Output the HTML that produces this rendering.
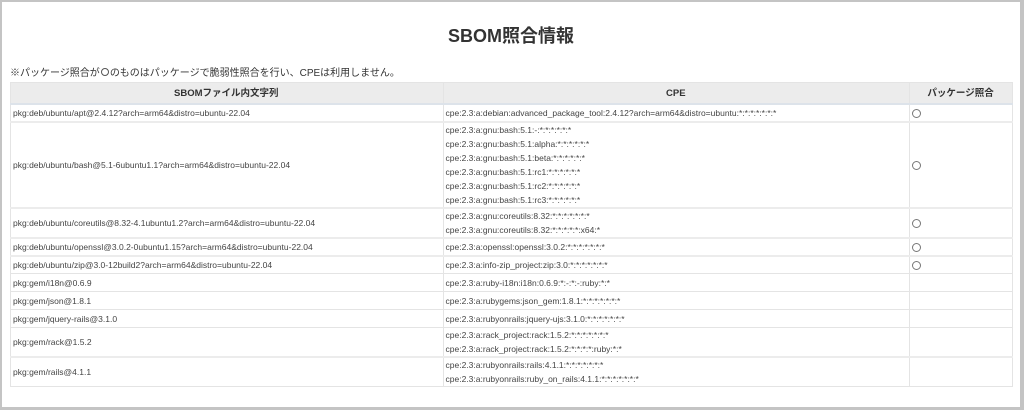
<!DOCTYPE html>
<html><head><meta charset="utf-8"><style>
*{margin:0;padding:0;box-sizing:border-box}
body{width:1024px;height:410px;background:#c4c4c4;font-family:"Liberation Sans","Noto Sans CJK JP",sans-serif;color:#333;overflow:hidden;position:relative}
.page{position:absolute;left:2px;top:2px;width:1018px;height:405px;background:#fff}
h1{position:absolute;left:0;width:1018px;top:20px;text-align:center;font-size:18px;font-weight:bold;color:#333}
.note{position:absolute;left:8px;top:62px;font-size:10px;color:#333}
.o{display:inline-block;width:8px;height:8px;border:1px solid #555;border-radius:50%;margin:0 1px}
table{position:absolute;left:8px;top:80px;width:1003px;border-collapse:collapse;font-size:8.5px;color:#444}
td,th{border:1px solid #e4e4e4;padding:0 3px 0 2px;vertical-align:middle;text-align:left;line-height:14px}
th{background:#ececec;height:21px;text-align:center;font-size:9.5px;font-weight:bold;color:#333;border-bottom:2px solid #dde3ea;padding-top:2px}
tr.r td{border-top:2px solid #ececec}
.ci{display:inline-block;width:9px;height:9px;border:1px solid #777;border-radius:50%;vertical-align:middle}
</style></head><body><div class="page">
<h1>SBOM照合情報</h1>
<div class="note">※パッケージ照合が<span class="o"></span>のものはパッケージで脆弱性照合を行い、CPEは利用しません。</div>
<table>
<colgroup><col style="width:433px"><col style="width:467px"><col style="width:103px"></colgroup>
<tr><th>SBOMファイル内文字列</th><th>CPE</th><th>パッケージ照合</th></tr>
<tr style="height:18px"><td>pkg:deb/ubuntu/apt@2.4.12?arch=arm64&amp;distro=ubuntu-22.04</td><td>cpe:2.3:a:debian:advanced_package_tool:2.4.12?arch=arm64&amp;distro=ubuntu:*:*:*:*:*:*:*</td><td><span class="ci"></span></td></tr>
<tr class="r" style="height:85px"><td>pkg:deb/ubuntu/bash@5.1-6ubuntu1.1?arch=arm64&amp;distro=ubuntu-22.04</td><td>cpe:2.3:a:gnu:bash:5.1:-:*:*:*:*:*:*<br>cpe:2.3:a:gnu:bash:5.1:alpha:*:*:*:*:*:*<br>cpe:2.3:a:gnu:bash:5.1:beta:*:*:*:*:*:*<br>cpe:2.3:a:gnu:bash:5.1:rc1:*:*:*:*:*:*<br>cpe:2.3:a:gnu:bash:5.1:rc2:*:*:*:*:*:*<br>cpe:2.3:a:gnu:bash:5.1:rc3:*:*:*:*:*:*</td><td><span class="ci"></span></td></tr>
<tr class="r" style="height:28px"><td>pkg:deb/ubuntu/coreutils@8.32-4.1ubuntu1.2?arch=arm64&amp;distro=ubuntu-22.04</td><td>cpe:2.3:a:gnu:coreutils:8.32:*:*:*:*:*:*:*<br>cpe:2.3:a:gnu:coreutils:8.32:*:*:*:*:*:x64:*</td><td><span class="ci"></span></td></tr>
<tr class="r" style="height:18px"><td>pkg:deb/ubuntu/openssl@3.0.2-0ubuntu1.15?arch=arm64&amp;distro=ubuntu-22.04</td><td>cpe:2.3:a:openssl:openssl:3.0.2:*:*:*:*:*:*:*</td><td><span class="ci"></span></td></tr>
<tr class="r" style="height:18px"><td>pkg:deb/ubuntu/zip@3.0-12build2?arch=arm64&amp;distro=ubuntu-22.04</td><td>cpe:2.3:a:info-zip_project:zip:3.0:*:*:*:*:*:*:*</td><td><span class="ci"></span></td></tr>
<tr style="height:18px"><td>pkg:gem/i18n@0.6.9</td><td>cpe:2.3:a:ruby-i18n:i18n:0.6.9:*:-:*:-:ruby:*:*</td><td></td></tr>
<tr style="height:18px"><td>pkg:gem/json@1.8.1</td><td>cpe:2.3:a:rubygems:json_gem:1.8.1:*:*:*:*:*:*:*</td><td></td></tr>
<tr style="height:18px"><td>pkg:gem/jquery-rails@3.1.0</td><td>cpe:2.3:a:rubyonrails:jquery-ujs:3.1.0:*:*:*:*:*:*:*</td><td></td></tr>
<tr style="height:29px"><td>pkg:gem/rack@1.5.2</td><td>cpe:2.3:a:rack_project:rack:1.5.2:*:*:*:*:*:*:*<br>cpe:2.3:a:rack_project:rack:1.5.2:*:*:*:*:ruby:*:*</td><td></td></tr>
<tr class="r" style="height:29px"><td>pkg:gem/rails@4.1.1</td><td>cpe:2.3:a:rubyonrails:rails:4.1.1:*:*:*:*:*:*:*<br>cpe:2.3:a:rubyonrails:ruby_on_rails:4.1.1:*:*:*:*:*:*:*</td><td></td></tr>
</table>
</div></body></html>
